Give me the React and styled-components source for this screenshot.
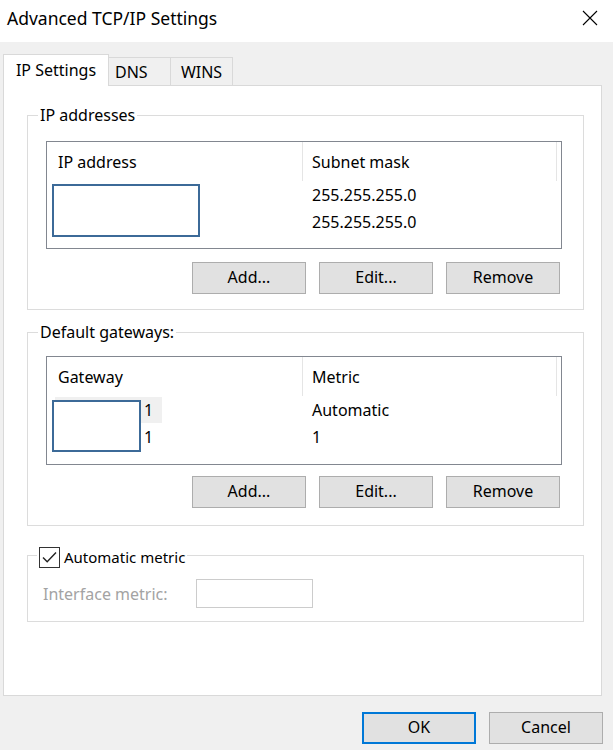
import React from 'react'
import styled, { createGlobalStyle } from 'styled-components'

const GlobalStyle = createGlobalStyle`
  * { box-sizing: border-box; }
  body {
    margin: 0;
    background: #f0f0f0;
    font-family: 'Noto Sans', 'Open Sans', sans-serif;
    font-size: 16px;
    color: #000;
  }
`

const Window = styled.div`
  width: 613px;
  height: 750px;
  display: flex;
  flex-direction: column;
  background: #f0f0f0;
  overflow: hidden;
`

const TitleBar = styled.div`
  height: 42px;
  flex: none;
  background: #fff;
  display: flex;
  align-items: center;
  justify-content: space-between;
  padding: 0 15px 6px 7px;
`

const Title = styled.span`
  font-size: 17.5px;
  line-height: 20px;
`

const Body = styled.div`
  padding-top: 12px;
  display: flex;
  flex-direction: column;
`

const TabStrip = styled.div`
  display: flex;
  align-items: flex-end;
  height: 31px;
  margin-left: 3px;
`

const Tab = styled.div`
  height: ${p => (p.$active ? '32px' : '28px')};
  width: ${p => p.$w}px;
  margin-bottom: ${p => (p.$active ? '-1px' : '0')};
  position: relative;
  z-index: ${p => (p.$active ? 1 : 0)};
  background: ${p => (p.$active ? '#fff' : '#f0f0f0')};
  border: 1px solid #d9d9d9;
  border-bottom: none;
  border-left: ${p => (p.$first ? '1px solid #d9d9d9' : 'none')};
  display: flex;
  align-items: center;
  justify-content: ${p => (p.$pad != null ? 'flex-start' : 'center')};
  padding-left: ${p => p.$pad || 0}px;
  padding-bottom: ${p => (p.$active ? '2px' : '0')};
  line-height: 20px;
`

const Panel = styled.div`
  margin-left: 3px;
  width: 599px;
  height: 611px;
  background: #fff;
  border: 1px solid #d9d9d9;
  padding: 19px 0 0 23px;
  display: flex;
  flex-direction: column;
`

const Group = styled.fieldset`
  margin: ${p => p.$top || 0}px 0 0 0;
  width: 557px;
  min-width: 0;
  border: 1px solid #dcdcdc;
  padding: 0 21px ${p => p.$bottom ?? 15}px ${p => p.$left ?? 18}px;
`

const Legend = styled.legend`
  margin-left: ${p => p.$ml ?? -8}px;
  padding: ${p => p.$pt || 0}px 2px 0;
  line-height: ${p => p.$lh || 20}px;
  font-size: ${p => p.$fs || 16}px;
  display: flex;
  align-items: center;
  gap: 4px;
`

const ListView = styled.div`
  position: relative;
  margin-top: ${p => p.$top}px;
  height: ${p => p.$h}px;
  border: 1px solid #828790;
  background: #fff;
`

const ListRow = styled.div`
  display: grid;
  grid-template-columns: 256px 254px 1fr;
  height: ${p => (p.$header ? '39px' : '27px')};
  align-items: center;
`

const HeadCell = styled.div`
  height: 100%;
  display: flex;
  align-items: center;
  padding-left: ${p => p.$pad}px;
  border-right: ${p => (p.$last ? 'none' : '1px solid #e5e5e5')};
`

const Cell = styled.div`
  padding-left: ${p => p.$pad}px;
  line-height: 26px;
`

const Highlight = styled.span`
  display: block;
  width: 107px;
  height: 26px;
  padding-left: 89px;
  background: ${p => (p.$on ? '#f0f0f0' : 'transparent')};
`

const Redaction = styled.div`
  position: absolute;
  left: 5px;
  top: ${p => p.$top}px;
  width: ${p => p.$w}px;
  height: ${p => p.$h}px;
  border: 2px solid #3c6a98;
  background: #fff;
`

const ButtonRow = styled.div`
  display: flex;
  justify-content: flex-end;
  gap: 13px;
  margin-top: ${p => p.$top ?? 13}px;
  padding-right: 2px;
`

const Button = styled.button`
  width: 114px;
  height: 32px;
  background: #e1e1e1;
  border: ${p => (p.$default ? '2px solid #0078d7' : '1px solid #adadad')};
  font-family: inherit;
  font-size: 16px;
  color: #000;
  padding: 0 0 2px;
`

const MetricRow = styled.div`
  display: flex;
  align-items: center;
  margin-top: 11px;
`

const DisabledLabel = styled.span`
  width: 153px;
  color: #a3a3a3;
  line-height: 20px;
`

const DisabledInput = styled.div`
  width: 117px;
  height: 29px;
  border: 1px solid #cccccc;
  background: #fff;
`

const Footer = styled.div`
  display: flex;
  justify-content: flex-end;
  gap: 13px;
  margin-top: 16px;
  padding-right: 10px;
`

const CloseIcon = () => (
  <svg width="16" height="16" viewBox="0 0 16 16">
    <path d="M1 1 L15 15 M15 1 L1 15" stroke="#000" strokeWidth="1.1" fill="none" />
  </svg>
)

const CheckBox = () => (
  <svg width="21" height="21" viewBox="0 0 21 21">
    <rect x="0.5" y="0.5" width="20" height="20" fill="#fff" stroke="#333" strokeWidth="1" />
    <path d="M4 10.5 L8.2 14.8 L17 5.5" stroke="#222" strokeWidth="1.4" fill="none" />
  </svg>
)

export default function App() {
  return (
    <Window>
      <GlobalStyle />
      <TitleBar>
        <Title>Advanced TCP/IP Settings</Title>
        <CloseIcon />
      </TitleBar>
      <Body>
        <TabStrip>
          <Tab $active $first $w={106}>IP Settings</Tab>
          <Tab $w={62} $pad={6}>DNS</Tab>
          <Tab $w={62}>WINS</Tab>
        </TabStrip>
        <Panel>
          <Group>
            <Legend>IP addresses</Legend>
            <ListView $top={16} $h={108}>
              <ListRow $header>
                <HeadCell $pad={11}>IP address</HeadCell>
                <HeadCell $pad={9}>Subnet mask</HeadCell>
                <HeadCell $last />
              </ListRow>
              <ListRow>
                <Cell $pad={8} />
                <Cell $pad={9}>255.255.255.0</Cell>
              </ListRow>
              <ListRow>
                <Cell $pad={8} />
                <Cell $pad={9}>255.255.255.0</Cell>
              </ListRow>
              <Redaction $top={42} $w={148} $h={53} />
            </ListView>
            <ButtonRow>
              <Button>Add...</Button>
              <Button>Edit...</Button>
              <Button>Remove</Button>
            </ButtonRow>
          </Group>

          <Group $top={12} $bottom={17}>
            <Legend>Default gateways:</Legend>
            <ListView $top={14} $h={109}>
              <ListRow $header>
                <HeadCell $pad={11}>Gateway</HeadCell>
                <HeadCell $pad={9}>Metric</HeadCell>
                <HeadCell $last />
              </ListRow>
              <ListRow>
                <Cell $pad={8}><Highlight $on>1</Highlight></Cell>
                <Cell $pad={9}>Automatic</Cell>
              </ListRow>
              <ListRow>
                <Cell $pad={8}><Highlight>1</Highlight></Cell>
                <Cell $pad={9}>1</Cell>
              </ListRow>
              <Redaction $top={43} $w={89} $h={52} />
            </ListView>
            <ButtonRow $top={11}>
              <Button>Add...</Button>
              <Button>Edit...</Button>
              <Button>Remove</Button>
            </ButtonRow>
          </Group>

          <Group $top={16} $left={15} $bottom={13}>
            <Legend $ml={-6} $lh={22} $fs={15} $pt={4}>
              <CheckBox />
              <span>Automatic metric</span>
            </Legend>
            <MetricRow>
              <DisabledLabel>Interface metric:</DisabledLabel>
              <DisabledInput />
            </MetricRow>
          </Group>
        </Panel>
        <Footer>
          <Button $default>OK</Button>
          <Button>Cancel</Button>
        </Footer>
      </Body>
    </Window>
  )
}
